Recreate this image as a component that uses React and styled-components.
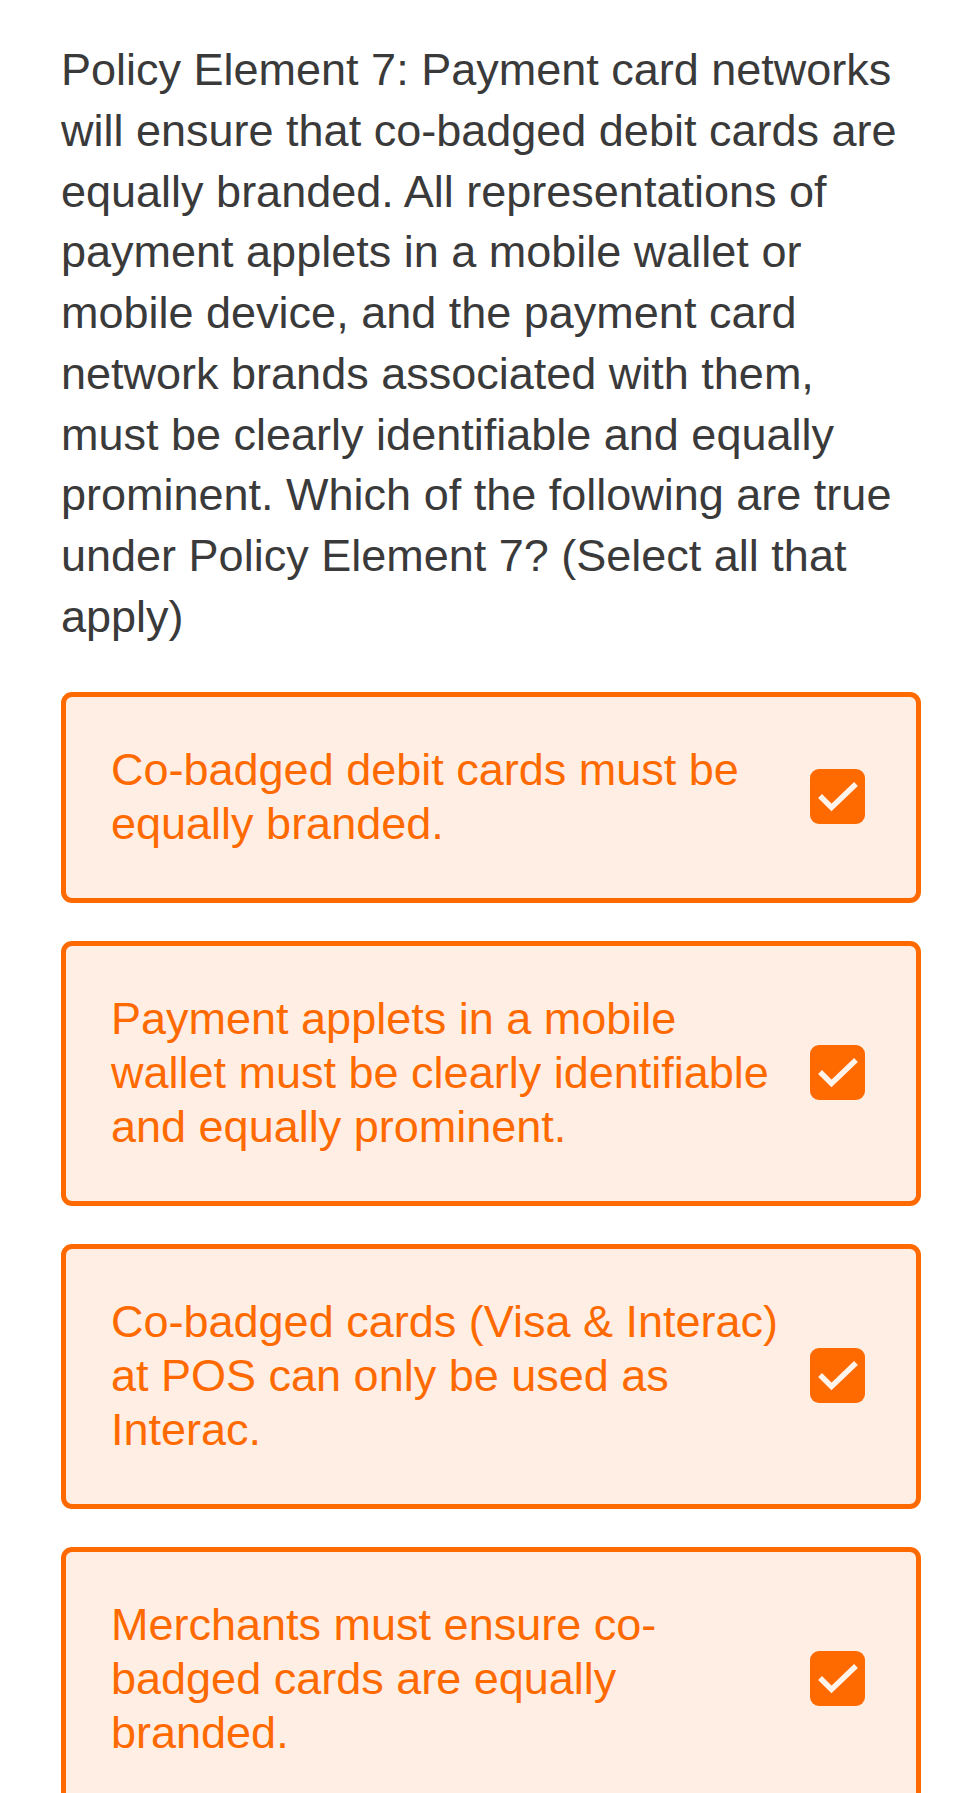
import React from 'react';
import styled, { createGlobalStyle } from 'styled-components';

const GlobalStyle = createGlobalStyle`
  html, body {
    margin: 0;
    padding: 0;
    background: #ffffff;
  }
  body {
    font-family: "Liberation Sans", Arial, sans-serif;
  }
`;

const Page = styled.div`
  padding: 40px 59px 0 61px;
`;

const Question = styled.p`
  margin: 0 0 44px;
  font-size: 45px;
  line-height: 60.75px;
  color: #3a3a3a;
`;

const OptionList = styled.div`
  display: flex;
  flex-direction: column;
  gap: 38px;
`;

const OptionCard = styled.label`
  display: flex;
  align-items: center;
  gap: 22px;
  padding: 46px 51px 47px 45px;
  border: 5px solid #ff6a00;
  border-radius: 11px;
  background: ${({ $checked }) => ($checked ? '#ffeee4' : '#ffffff')};
  cursor: pointer;
`;

const OptionText = styled.span`
  flex: 1;
  font-size: 45px;
  line-height: 54px;
  color: #ff6a00;
`;

const CheckBox = styled.span`
  flex: 0 0 55px;
  width: 55px;
  height: 55px;
  border-radius: 9px;
  background: ${({ $checked }) => ($checked ? '#ff6a00' : 'transparent')};
  display: flex;
  align-items: center;
  justify-content: center;
`;

const options = [
  'Co-badged debit cards must be equally branded.',
  'Payment applets in a mobile wallet must be clearly identifiable and equally prominent.',
  'Co-badged cards (Visa & Interac) at POS can only be used as Interac.',
  'Merchants must ensure co-badged cards are equally branded.',
];

const CheckMark = () => (
  <svg width="55" height="55" viewBox="0 0 55 55" fill="none">
    <path
      d="M12 29 L21.5 38.5 L44 17"
      stroke="#fff4ec"
      strokeWidth="5.5"
      strokeLinecap="square"
      strokeLinejoin="miter"
    />
  </svg>
);

export default function App() {
  return (
    <Page>
      <GlobalStyle />
      <Question>
        Policy Element 7: Payment card networks will ensure that co-badged debit
        cards are equally branded. All representations of payment applets in a
        mobile wallet or mobile device, and the payment card network brands
        associated with them, must be clearly identifiable and equally prominent.
        Which of the following are true under Policy Element 7? (Select all that
        apply)
      </Question>
      <OptionList>
        {options.map((text, index) => (
          <OptionCard key={index} $checked>
            <OptionText>{text}</OptionText>
            <CheckBox $checked>
              <CheckMark />
            </CheckBox>
          </OptionCard>
        ))}
      </OptionList>
    </Page>
  );
}
